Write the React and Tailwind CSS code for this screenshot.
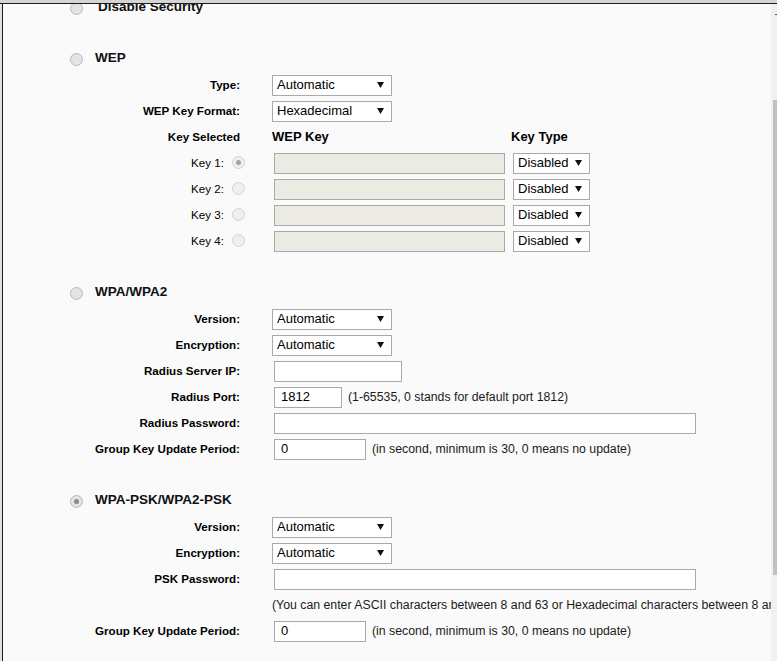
import React from "react";

const Radio = ({ checked = false, light = false }) => (
  <span
    className={
      light
        ? "shrink-0 w-[13px] h-[13px] rounded-full border border-[#d3d3d3] bg-[#efefef] flex items-center justify-center"
        : "shrink-0 w-[13px] h-[13px] rounded-full border border-[#b9b9b9] bg-[#e3e3e3] flex items-center justify-center"
    }
  >
    {checked && (
      <span
        className={
          light
            ? "w-[5px] h-[5px] rounded-full bg-[#a3a3a3]"
            : "w-[5px] h-[5px] rounded-full bg-[#8a8a8a]"
        }
      />
    )}
  </span>
);

const Arrow = () => (
  <svg width="7" height="6" viewBox="0 0 7 6" className="shrink-0">
    <path d="M0 0 L7 0 L3.5 6 Z" fill="#111" />
  </svg>
);

const Select = ({ value, w = "w-[120px]" }) => (
  <div
    className={`${w} h-[21px] bg-white border border-[#a9a9a9] flex items-center justify-between pl-[4px] pr-[7px] text-[13px] text-black`}
  >
    <span>{value}</span>
    <Arrow />
  </div>
);

const Input = ({ value = "", w, disabled = false }) => (
  <div
    className={`${w} h-[21px] border border-[#a9a9a9] flex items-center pl-[6px] text-[13px] text-black ${
      disabled ? "bg-[#ebebe4]" : "bg-white"
    }`}
  >
    {value}
  </div>
);

const Row = ({ children }) => (
  <div className="h-[26px] flex items-center shrink-0">{children}</div>
);

const Blank = () => <div className="h-[26px] shrink-0" />;

const Heading = ({ text, checked, extra = "" }) => (
  <Row>
    <div className="pl-[67px] flex items-center">
      <Radio checked={checked} />
      <span
        className={`ml-[12px] font-bold text-[13.5px] text-[#111] leading-none -mt-[2px] ${extra}`}
      >
        {text}
      </span>
    </div>
  </Row>
);

const Label = ({ children }) => (
  <div className="w-[237px] shrink-0 text-right font-bold text-[11.6px] text-black">
    {children}
  </div>
);

const SelectRow = ({ label, value }) => (
  <Row>
    <Label>{label}</Label>
    <div className="ml-[32px]">
      <Select value={value} />
    </div>
  </Row>
);

const Note = ({ children, extra = "" }) => (
  <span className={`text-[12.3px] text-[#1a1a1a] whitespace-nowrap ${extra}`}>
    {children}
  </span>
);

const InputRow = ({ label, w, value, note }) => (
  <Row>
    <Label>{label}</Label>
    <div className="ml-[34px] flex items-center">
      <Input w={w} value={value} />
      {note && <Note extra="ml-[6px]">{note}</Note>}
    </div>
  </Row>
);

const KeyRow = ({ n, checked }) => (
  <Row>
    <div className="w-[242px] shrink-0 flex justify-end items-center gap-[8px]">
      <span className="text-[11.6px] text-black">Key {n}:</span>
      <Radio checked={checked} light />
    </div>
    <div className="ml-[29px] flex items-center">
      <Input w="w-[231px]" disabled />
      <div className="ml-[8px]">
        <Select value="Disabled" w="w-[77px]" />
      </div>
    </div>
  </Row>
);

export default function App() {
  return (
    <div className="w-[777px] h-[661px] bg-[#fafafa] flex flex-col overflow-hidden font-['Liberation_Sans',Arial,sans-serif]">
      <div className="h-[3px] bg-[#d4d4d4] shrink-0" />
      <div className="h-[1px] bg-[#1c1c1c] shrink-0" />
      <div className="flex-1 flex min-h-0">
        <div className="w-[2px] bg-[#e2e2e2] shrink-0" />
        <div className="w-[1px] bg-[#1c1c1c] shrink-0" />
        <div className="flex-1 min-w-0 overflow-hidden">
          <div className="mt-[-9px] flex flex-col">
            <Heading text="Disable Security" extra="ml-[15px]" />
            <div className="h-[25px] shrink-0" />
            <Heading text="WEP" />
            <SelectRow label="Type:" value="Automatic" />
            <SelectRow label="WEP Key Format:" value="Hexadecimal" />
            <Row>
              <Label>Key Selected</Label>
              <div className="ml-[32px] w-[239px] font-bold text-[13px] text-black">
                WEP Key
              </div>
              <div className="font-bold text-[13px] text-black">Key Type</div>
            </Row>
            <KeyRow n={1} checked />
            <KeyRow n={2} />
            <KeyRow n={3} />
            <KeyRow n={4} />
            <Blank />
            <Heading text="WPA/WPA2" />
            <SelectRow label="Version:" value="Automatic" />
            <SelectRow label="Encryption:" value="Automatic" />
            <InputRow label="Radius Server IP:" w="w-[128px]" />
            <InputRow
              label="Radius Port:"
              w="w-[68px]"
              value="1812"
              note="(1-65535, 0 stands for default port 1812)"
            />
            <InputRow label="Radius Password:" w="w-[422px]" />
            <InputRow
              label="Group Key Update Period:"
              w="w-[92px]"
              value="0"
              note="(in second, minimum is 30, 0 means no update)"
            />
            <Blank />
            <Heading text="WPA-PSK/WPA2-PSK" checked />
            <SelectRow label="Version:" value="Automatic" />
            <SelectRow label="Encryption:" value="Automatic" />
            <InputRow label="PSK Password:" w="w-[422px]" />
            <Row>
              <div className="w-[237px] shrink-0" />
              <Note extra="ml-[32px]">
                (You can enter ASCII characters between 8 and 63 or Hexadecimal characters between 8 and 64.)
              </Note>
            </Row>
            <InputRow
              label="Group Key Update Period:"
              w="w-[92px]"
              value="0"
              note="(in second, minimum is 30, 0 means no update)"
            />
          </div>
        </div>
        <div className="w-[6px] shrink-0 bg-[#f0f0f0] flex flex-col items-end">
          <div className="mt-[10px] w-[2px] h-[1px] bg-[#555]" />
          <div className="mt-[85px] w-[4px] h-[475px] bg-[#c1c1c1]" />
        </div>
      </div>
    </div>
  );
}
